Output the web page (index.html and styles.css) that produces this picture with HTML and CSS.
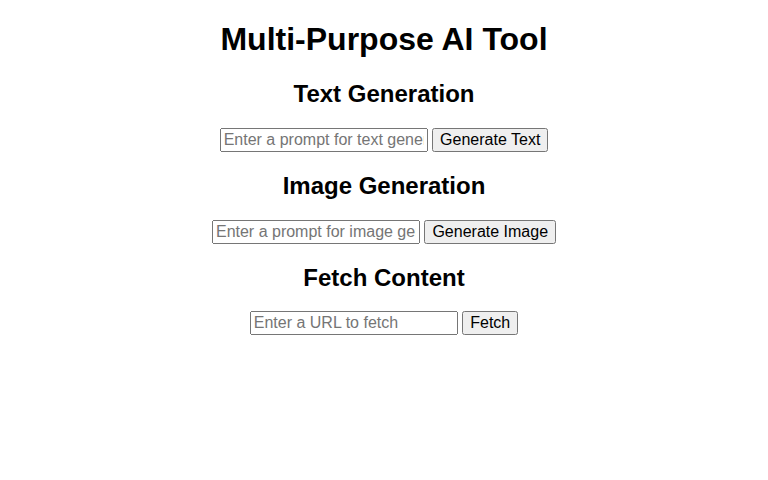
FILE: index.html
```html
<!DOCTYPE html>
<html>
<head>
<meta charset="utf-8">
<title>Multi-Purpose AI Tool</title>
<link rel="stylesheet" href="styles.css">
</head>
<body>
<h1>Multi-Purpose AI Tool</h1>
<h2>Text Generation</h2>
<div class="row"><input type="text" class="field" placeholder="Enter a prompt for text generation"> <button class="btn">Generate Text</button></div>
<h2>Image Generation</h2>
<div class="row"><input type="text" class="field" placeholder="Enter a prompt for image generation"> <button class="btn">Generate Image</button></div>
<h2>Fetch Content</h2>
<div class="row"><input type="text" class="field" placeholder="Enter a URL to fetch"> <button class="btn">Fetch</button></div>
</body>
</html>
```
FILE: styles.css
```css
body {
  margin: 0 8px;
  font-family: "Liberation Sans", Arial, sans-serif;
  text-align: center;
  color: #000;
  background: #fff;
}
.field, .btn {
  font-family: inherit;
  font-size: 16px;
}
.field {
  width: 200px;
}
```
